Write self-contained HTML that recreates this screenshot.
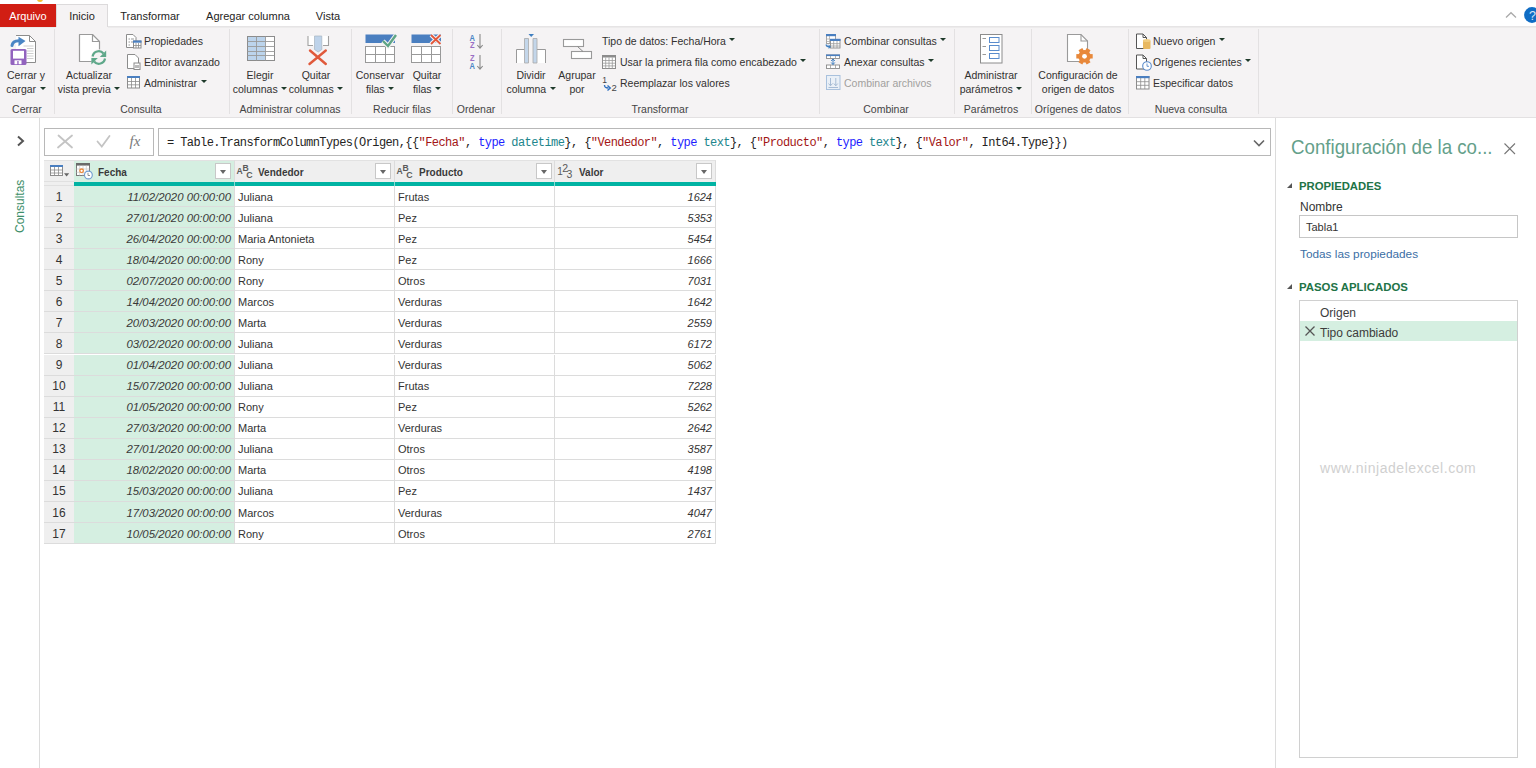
<!DOCTYPE html>
<html><head><meta charset="utf-8">
<style>
*{box-sizing:border-box;margin:0;padding:0}
html,body{width:1536px;height:768px;overflow:hidden;background:#fff;font-family:"Liberation Sans",sans-serif;color:#252423}
.a{position:absolute;white-space:nowrap}
.tab{position:absolute;top:4px;height:23px;font-size:11px;line-height:24px;text-align:center;color:#252423}
#ribbon{position:absolute;left:0;top:27px;width:1536px;height:91px;background:#f5f3f4;border-bottom:1px solid #e3e1e2}
.sep{position:absolute;top:29px;width:1px;height:85px;background:#e3e1e2}
.rt{position:absolute;top:69.3px;font-size:10.5px;line-height:13.5px;text-align:center;white-space:nowrap;color:#323130}
.gl{position:absolute;top:102.5px;font-size:10.5px;line-height:13px;text-align:center;white-space:nowrap;color:#444}
.st{position:absolute;font-size:10.5px;line-height:13px;white-space:nowrap;color:#323130}
.dd{display:inline-block;width:0;height:0;border-left:3px solid transparent;border-right:3px solid transparent;border-top:3px solid #1e3a2a;vertical-align:middle;margin-left:3.5px;position:relative;top:-2px}
#ov{position:absolute;left:0;top:0;width:1536px;height:768px;overflow:visible}
/* table */
.th{position:absolute;top:160px;height:22px;background:#efefef;border-right:1px solid #dcdcdc}
.thn{position:absolute;top:165.5px;font-size:10px;font-weight:bold;line-height:13px;color:#3a3a3a}
.ddb{position:absolute;top:163px;width:16px;height:16px;background:#fff;border:1px solid #c8c8c8}
.ddb:after{content:"";position:absolute;left:4px;top:6px;border-left:3.5px solid transparent;border-right:3.5px solid transparent;border-top:4px solid #666}
.tr{position:absolute;left:44px;width:672px;height:21px;font-size:11px;line-height:20px}
.tr div{position:absolute;top:0;height:21px;border-bottom:1px solid #dcdcdc;padding-top:0.5px;white-space:nowrap}
.c0{left:0;width:30px;background:#efefef;text-align:center;color:#333;font-size:12px}
.c1{left:30px;width:161px;background:#d5efe1;text-align:right;padding-right:3px;font-style:italic;color:#3b3a39;font-size:11.4px;border-right:1px solid #dcdcdc}
.c2{left:191px;width:160px;padding-left:3px;border-right:1px solid #dcdcdc;color:#333}
.c3{left:351px;width:160px;padding-left:3px;border-right:1px solid #dcdcdc;color:#333}
.c4{left:511px;width:161px;text-align:right;padding-right:3px;font-style:italic;border-right:1px solid #dcdcdc;color:#333}
.fm{position:absolute;left:167px;top:135.5px;font-family:"Liberation Mono",monospace;font-size:12px;letter-spacing:-0.58px;line-height:14px;color:#252423;white-space:pre}
.kw{color:#1c1cff}.ty{color:#21858c}.str{color:#a31515}
</style></head><body>
<div class="a" style="left:0;top:0;width:1536px;height:27px;background:#fff"></div>
<div class="a" style="left:0;top:26px;width:1536px;height:1px;background:#e6e4e5"></div>
<div class="a" style="left:36.5px;top:-4px;width:6px;height:5.5px;border-radius:50%;background:#f2c230"></div>
<div class="tab" style="left:0;width:56px;background:#d11e14;color:#fff">Arquivo</div>
<div class="tab" style="left:56px;width:52px;background:#f5f3f4;border:1px solid #dcdadb;border-bottom:none;height:24px;line-height:22.5px">Inicio</div>
<div class="tab" style="left:108px;width:84px">Transformar</div>
<div class="tab" style="left:196px;width:104px">Agregar columna</div>
<div class="tab" style="left:306px;width:44px">Vista</div>
<div id="ribbon">
</div>
<div class="a" style="left:108px;top:27px;width:1428px;height:1px;background:#ecebeb"></div>
<div class="a" style="left:0;top:27px;width:56px;height:1px;background:#ecebeb"></div>
<!-- separators -->
<div class="sep" style="left:54px"></div>
<div class="sep" style="left:229px"></div>
<div class="sep" style="left:351px"></div>
<div class="sep" style="left:452px"></div>
<div class="sep" style="left:501px"></div>
<div class="sep" style="left:819px"></div>
<div class="sep" style="left:954px"></div>
<div class="sep" style="left:1031px"></div>
<div class="sep" style="left:1128px"></div>
<div class="sep" style="left:1258px"></div>

<!-- group labels -->
<div class="gl" style="left:-3px;width:60px">Cerrar</div>
<div class="gl" style="left:100px;width:82px">Consulta</div>
<div class="gl" style="left:230px;width:120px">Administrar columnas</div>
<div class="gl" style="left:352px;width:100px">Reducir filas</div>
<div class="gl" style="left:446px;width:60px">Ordenar</div>
<div class="gl" style="left:600px;width:120px">Transformar</div>
<div class="gl" style="left:836px;width:100px">Combinar</div>
<div class="gl" style="left:951px;width:80px">Parámetros</div>
<div class="gl" style="left:1028px;width:100px">Orígenes de datos</div>
<div class="gl" style="left:1141px;width:100px">Nueva consulta</div>

<!-- big button texts -->
<div class="rt" style="left:-4px;width:60px">Cerrar y<br>cargar<span class="dd"></span></div>
<div class="rt" style="left:49px;width:80px">Actualizar<br>vista previa<span class="dd"></span></div>
<div class="rt" style="left:225px;width:70px">Elegir<br>columnas<span class="dd"></span></div>
<div class="rt" style="left:281px;width:70px">Quitar<br>columnas<span class="dd"></span></div>
<div class="rt" style="left:350px;width:60px">Conservar<br>filas<span class="dd"></span></div>
<div class="rt" style="left:402px;width:50px">Quitar<br>filas<span class="dd"></span></div>
<div class="rt" style="left:500px;width:62px">Dividir<br>columna<span class="dd"></span></div>
<div class="rt" style="left:550px;width:54px">Agrupar<br>por</div>
<div class="rt" style="left:951px;width:80px">Administrar<br>parámetros<span class="dd"></span></div>
<div class="rt" style="left:1033px;width:90px">Configuración de<br>origen de datos</div>

<!-- small button texts -->
<div class="st" style="left:144px;top:34.5px">Propiedades</div>
<div class="st" style="left:144px;top:55.5px">Editor avanzado</div>
<div class="st" style="left:144px;top:76.5px">Administrar<span class="dd"></span></div>
<div class="st" style="left:602px;top:34.5px">Tipo de datos: Fecha/Hora<span class="dd"></span></div>
<div class="st" style="left:620px;top:55.5px">Usar la primera fila como encabezado<span class="dd"></span></div>
<div class="st" style="left:620px;top:76.5px">Reemplazar los valores</div>
<div class="st" style="left:844px;top:34.5px">Combinar consultas<span class="dd"></span></div>
<div class="st" style="left:844px;top:55.5px">Anexar consultas<span class="dd"></span></div>
<div class="st" style="left:844px;top:76.5px;color:#a19f9d">Combinar archivos</div>
<div class="st" style="left:1153px;top:34.5px">Nuevo origen<span class="dd"></span></div>
<div class="st" style="left:1153px;top:55.5px">Orígenes recientes<span class="dd"></span></div>
<div class="st" style="left:1153px;top:76.5px">Especificar datos</div>
<!-- left panel -->
<div class="a" style="left:39px;top:118px;width:1px;height:650px;background:#dcdcdc"></div>
<div class="a" style="left:1275px;top:118px;width:1px;height:650px;background:#dcdcdc"></div>
<div class="a" style="left:2px;top:208px;width:36px;transform:rotate(-90deg);transform-origin:center;font-size:12px;color:#3d8f6a;text-align:center">Consultas</div>

<!-- formula bar -->
<div class="a" style="left:44px;top:128px;width:110px;height:28px;border:1px solid #b8b8b8;background:#fff"></div>
<div class="a" style="left:158px;top:128px;width:1113px;height:28px;border:1px solid #b8b8b8;background:#fff"></div>
<div class="fm">= Table.TransformColumnTypes(Origen,{{<span class="str">"Fecha"</span>, <span class="kw">type</span> <span class="ty">datetime</span>}, {<span class="str">"Vendedor"</span>, <span class="kw">type</span> <span class="ty">text</span>}, {<span class="str">"Producto"</span>, <span class="kw">type</span> <span class="ty">text</span>}, {<span class="str">"Valor"</span>, Int64.Type}})</div>

<!-- table header -->
<div class="th" style="left:44px;width:30px;border-right:none;border-top:1px solid #e2e2e2"></div>
<div class="th" style="left:74px;width:161px;background:#d5efe1;border-top:1px solid #e2e2e2"></div>
<div class="th" style="left:235px;width:160px;border-top:1px solid #e2e2e2"></div>
<div class="th" style="left:395px;width:160px;border-top:1px solid #e2e2e2"></div>
<div class="th" style="left:555px;width:161px;border-top:1px solid #e2e2e2"></div>
<div class="a" style="left:44px;top:181px;width:30px;height:5px;background:#efefef;border-top:1px solid #e0e0e0;border-bottom:1px solid #e0e0e0"></div>
<div class="a" style="left:74px;top:182px;width:642px;height:4px;background:#01b3a3"></div>
<div class="a" style="left:234px;top:182px;width:1px;height:4px;background:#8ad8d0"></div>
<div class="a" style="left:394px;top:182px;width:1px;height:4px;background:#8ad8d0"></div>
<div class="a" style="left:554px;top:182px;width:1px;height:4px;background:#8ad8d0"></div>
<div class="thn" style="left:98px">Fecha</div>
<div class="thn" style="left:258px">Vendedor</div>
<div class="thn" style="left:419px">Producto</div>
<div class="thn" style="left:579px">Valor</div>
<div class="ddb" style="left:215px"></div>
<div class="ddb" style="left:375px"></div>
<div class="ddb" style="left:536px"></div>
<div class="ddb" style="left:696px"></div>
<div class="tr" style="top:186.00px"><div class="c0">1</div><div class="c1">11/02/2020 00:00:00</div><div class="c2">Juliana</div><div class="c3">Frutas</div><div class="c4">1624</div></div>
<div class="tr" style="top:207.07px"><div class="c0">2</div><div class="c1">27/01/2020 00:00:00</div><div class="c2">Juliana</div><div class="c3">Pez</div><div class="c4">5353</div></div>
<div class="tr" style="top:228.14px"><div class="c0">3</div><div class="c1">26/04/2020 00:00:00</div><div class="c2">Maria Antonieta</div><div class="c3">Pez</div><div class="c4">5454</div></div>
<div class="tr" style="top:249.21px"><div class="c0">4</div><div class="c1">18/04/2020 00:00:00</div><div class="c2">Rony</div><div class="c3">Pez</div><div class="c4">1666</div></div>
<div class="tr" style="top:270.28px"><div class="c0">5</div><div class="c1">02/07/2020 00:00:00</div><div class="c2">Rony</div><div class="c3">Otros</div><div class="c4">7031</div></div>
<div class="tr" style="top:291.35px"><div class="c0">6</div><div class="c1">14/04/2020 00:00:00</div><div class="c2">Marcos</div><div class="c3">Verduras</div><div class="c4">1642</div></div>
<div class="tr" style="top:312.42px"><div class="c0">7</div><div class="c1">20/03/2020 00:00:00</div><div class="c2">Marta</div><div class="c3">Verduras</div><div class="c4">2559</div></div>
<div class="tr" style="top:333.49px"><div class="c0">8</div><div class="c1">03/02/2020 00:00:00</div><div class="c2">Juliana</div><div class="c3">Verduras</div><div class="c4">6172</div></div>
<div class="tr" style="top:354.56px"><div class="c0">9</div><div class="c1">01/04/2020 00:00:00</div><div class="c2">Juliana</div><div class="c3">Verduras</div><div class="c4">5062</div></div>
<div class="tr" style="top:375.63px"><div class="c0">10</div><div class="c1">15/07/2020 00:00:00</div><div class="c2">Juliana</div><div class="c3">Frutas</div><div class="c4">7228</div></div>
<div class="tr" style="top:396.70px"><div class="c0">11</div><div class="c1">01/05/2020 00:00:00</div><div class="c2">Rony</div><div class="c3">Pez</div><div class="c4">5262</div></div>
<div class="tr" style="top:417.77px"><div class="c0">12</div><div class="c1">27/03/2020 00:00:00</div><div class="c2">Marta</div><div class="c3">Verduras</div><div class="c4">2642</div></div>
<div class="tr" style="top:438.84px"><div class="c0">13</div><div class="c1">27/01/2020 00:00:00</div><div class="c2">Juliana</div><div class="c3">Otros</div><div class="c4">3587</div></div>
<div class="tr" style="top:459.91px"><div class="c0">14</div><div class="c1">18/02/2020 00:00:00</div><div class="c2">Marta</div><div class="c3">Otros</div><div class="c4">4198</div></div>
<div class="tr" style="top:480.98px"><div class="c0">15</div><div class="c1">15/03/2020 00:00:00</div><div class="c2">Juliana</div><div class="c3">Pez</div><div class="c4">1437</div></div>
<div class="tr" style="top:502.05px"><div class="c0">16</div><div class="c1">17/03/2020 00:00:00</div><div class="c2">Marcos</div><div class="c3">Verduras</div><div class="c4">4047</div></div>
<div class="tr" style="top:523.12px"><div class="c0">17</div><div class="c1">10/05/2020 00:00:00</div><div class="c2">Rony</div><div class="c3">Otros</div><div class="c4">2761</div></div><!-- settings panel -->
<div class="a" style="left:1291px;top:134px;font-size:18.7px;line-height:24px;color:#64a08a;transform:scaleY(1.1);transform-origin:0 0">Configuración de la co...</div>
<div class="a" style="left:1299px;top:179.8px;font-size:11.3px;font-weight:bold;line-height:13px;color:#217346">PROPIEDADES</div>
<div class="a" style="left:1300px;top:200px;font-size:12px;line-height:14px;color:#333">Nombre</div>
<div class="a" style="left:1299px;top:215px;width:219px;height:23px;border:1px solid #c6c6c6;background:#fff"></div>
<div class="a" style="left:1306px;top:220px;font-size:11px;line-height:14px;color:#333">Tabla1</div>
<div class="a" style="left:1300px;top:247px;font-size:11.8px;line-height:14px;color:#3b6ea5">Todas las propiedades</div>
<div class="a" style="left:1299px;top:280.8px;font-size:11.4px;font-weight:bold;line-height:13px;color:#217346">PASOS APLICADOS</div>
<div class="a" style="left:1299px;top:300px;width:219px;height:458px;border:1px solid #d0d0d0;background:#fff"></div>
<div class="a" style="left:1320px;top:306px;font-size:12px;line-height:14px;color:#3c3c3c">Origen</div>
<div class="a" style="left:1300px;top:321px;width:217px;height:20px;background:#d5efe1"></div>
<div class="a" style="left:1320px;top:326px;font-size:12px;line-height:14px;color:#3c3c3c">Tipo cambiado</div>
<div class="a" style="left:1320px;top:460px;font-size:14px;line-height:16px;color:#d0d0d0;letter-spacing:0.55px">www.ninjadelexcel.com</div>
<svg id="ov" viewBox="0 0 1536 768">
<!-- top right -->
<path d="M1506 17.5 L1511 12.7 L1516 17.5" fill="none" stroke="#aaa" stroke-width="1.3"/>
<circle cx="1532" cy="15" r="7.9" fill="#0f6cc4"/>
<text x="1529" y="19.8" font-family="Liberation Sans" font-size="12.5" fill="#d6e6f7">?</text>

<!-- Cerrar y cargar -->
<path d="M16 35.5 H29.5 L35.5 41.5 V62.5 H26" fill="#fff" stroke="#8c8c8c"/>
<path d="M16 35.5 V49 H26 V62.5" fill="#fff" stroke="none"/>
<path d="M29.5 35.5 V41.5 H35.5" fill="none" stroke="#8c8c8c"/>
<path d="M23.5 46 H33.5 M27 48.5 H33.5 M27 51 H33.5 M27 53.5 H33.5 M27 56 H33.5 M27 58.5 H33.5" stroke="#c8c8c8" stroke-width="0.9"/>
<path d="M12 45.5 C12.5 42 15 40.5 20 40.8" fill="none" stroke="#4a86c5" stroke-width="3" stroke-linecap="round"/>
<path d="M18.5 36.8 L25.5 41 L18.5 46.3 Z" fill="#4a86c5"/>
<rect x="10.5" y="49" width="16" height="16" rx="1.6" fill="#9263be"/>
<rect x="13" y="50.8" width="11" height="7.8" fill="#fff"/>
<rect x="14.5" y="60.3" width="7" height="3.9" fill="#fff"/>
<rect x="17.3" y="61" width="1.3" height="4" fill="#9263be"/>
<!-- Actualizar -->
<path d="M79.5 34.5 H92.5 L99.5 41.5 V61.5 H79.5 Z" fill="#fff" stroke="#9a9a9a" stroke-width="1.2" stroke-linejoin="round"/>
<path d="M92.5 34.5 V41.5 H99.5" fill="none" stroke="#9a9a9a" stroke-width="1.2"/>
<circle cx="98.8" cy="57.5" r="8.2" fill="#f5f3f4"/>
<path d="M92.6 56.5 A6.2 6.2 0 0 1 103.5 53.5" fill="none" stroke="#5fa88a" stroke-width="2.2"/>
<path d="M106.2 50.5 V57 H99.8 Z" fill="#5fa88a"/>
<path d="M105 58.5 A6.2 6.2 0 0 1 94.1 61.5" fill="none" stroke="#5fa88a" stroke-width="2.2"/>
<path d="M91.4 64.5 V58 H97.8 Z" fill="#5fa88a"/>
<!-- Propiedades -->
<path d="M126.5 34.5 H133 L136 37.5 V47.5 H126.5 Z" fill="#fff" stroke="#8c8c8c"/>
<path d="M128.5 39 h1.5 M131 39 h3 M128.5 42 h1.5 M131 42 h2 M128.5 45 h1.5" stroke="#999"/>
<rect x="133.5" y="41" width="7.5" height="7" fill="#fff" stroke="#8c8c8c"/>
<rect x="133" y="40.5" width="8.5" height="2.2" fill="#4a7fc0"/>
<path d="M136 43 V48 M138.5 43 V48 M133.5 45.5 H141" stroke="#8c8c8c" stroke-width="0.8"/>
<!-- Editor avanzado -->
<path d="M127.5 54.5 H135 L138.5 58 V68.5 H127.5 Z" fill="#fff" stroke="#8c8c8c"/>
<rect x="134" y="63" width="6" height="6.5" fill="#fff" stroke="#8c8c8c"/>
<path d="M136 65 V68 M138 65 V68" stroke="#555" stroke-width="0.8"/>
<!-- Administrar -->
<rect x="127.5" y="76.5" width="12" height="11.5" fill="#fff" stroke="#8c8c8c"/>
<rect x="127" y="76" width="13" height="2" fill="#4a7fc0"/>
<path d="M131.5 78 V88 M135.5 78 V88 M127.5 81.5 H139.5 M127.5 84.8 H139.5" stroke="#8c8c8c" stroke-width="0.8"/>

<!-- Elegir columnas -->
<rect x="247.5" y="36.5" width="27" height="24" fill="#fff" stroke="#8c8c8c"/>
<rect x="248" y="37" width="17.5" height="23" fill="#bcd4ec"/>
<path d="M256.5 36.5 V60.5 M265.5 36.5 V60.5 M247.5 41.5 H274.5 M247.5 46.5 H274.5 M247.5 51.5 H274.5 M247.5 55.5 H274.5" stroke="#9a9a9a" stroke-width="0.9"/>
<!-- Quitar columnas -->
<rect x="308" y="36" width="20.5" height="9.5" fill="#fff"/>
<path d="M308 36 V45.5 H313 M328.5 36 V45.5 H323" fill="none" stroke="#a0a0a0" stroke-width="1.1"/>
<path d="M314.5 36 H321.8 V49.5 L318.2 52 L314.5 49.5 Z" fill="#bed3ea" stroke="#a8b4c0" stroke-width="0.7"/>
<path d="M310 50.5 L325.8 64 M325.8 50.5 L309.5 64" stroke="#e0593b" stroke-width="2.4" stroke-linecap="round"/>

<!-- Conservar filas -->
<rect x="365.5" y="34.5" width="29.5" height="8.5" fill="#4a7fc0"/>
<rect x="365.5" y="46.5" width="29" height="16" fill="#fff" stroke="#999"/>
<path d="M375.5 46.5 V62.5 M385.5 46.5 V62.5 M365.5 54.5 H394.5" stroke="#999"/>
<path d="M383 41 L388 46 L396 35" fill="none" stroke="#f5f3f4" stroke-width="4.5"/>
<path d="M383 41 L388 46 L396 35" fill="none" stroke="#5ea585" stroke-width="2.4"/>
<!-- Quitar filas -->
<rect x="411.5" y="34.5" width="29.5" height="8.5" fill="#4a7fc0"/>
<rect x="411.5" y="46.5" width="29" height="16" fill="#fff" stroke="#999"/>
<path d="M421.5 46.5 V62.5 M431.5 46.5 V62.5 M411.5 54.5 H440.5" stroke="#999"/>
<path d="M431 35 L440.5 44 M440.5 35 L431 44" stroke="#f5f3f4" stroke-width="4"/>
<path d="M431 35 L440.5 44 M440.5 35 L431 44" stroke="#e1573a" stroke-width="1.8"/>

<!-- Sort -->
<g font-family="Liberation Sans" font-size="9.6" font-weight="bold" transform="translate(469.6 0) scale(0.78 1)">
<text x="0" y="40.8" fill="#4a86c5">A</text>
<text x="0.6" y="48.3" fill="#9b6fc4">Z</text>
<text x="0.6" y="61.3" fill="#9b6fc4">Z</text>
<text x="0" y="68.9" fill="#4a86c5">A</text>
</g>
<path d="M480 34 V48 M477.3 45 L480 48.2 L482.7 45" fill="none" stroke="#8a8a8a" stroke-width="1.1"/>
<path d="M480 55 V69 M477.3 66 L480 69.2 L482.7 66" fill="none" stroke="#8a8a8a" stroke-width="1.1"/>

<!-- Dividir columna -->
<path d="M516.5 63 V49.5 H524.5 V63 Z M536.5 49.5 H545.5 V63 H536.5 Z" fill="#fff" stroke="none"/>
<path d="M516.5 63 V49.5 H524.5 M536.5 49.5 H545.5 V63" fill="none" stroke="#999"/>
<path d="M524.5 38.5 H528.5 V63 H524.5 Z M533 38.5 H537 V63 H533 Z" fill="#c3d6ea" stroke="#a8a8a8" stroke-width="0.8"/>
<path d="M528.5 34 H534 L531.2 37 Z" fill="#3f7fc0"/>
<!-- Agrupar por -->
<rect x="563.5" y="39.5" width="20" height="7" fill="#fff" stroke="#999" stroke-width="1.1"/>
<rect x="571.5" y="51.5" width="20" height="7" fill="#fff" stroke="#999" stroke-width="1.1"/>
<path d="M577.5 46.5 L583 51.5" stroke="#888"/>
<!-- Usar primera fila -->
<rect x="602.5" y="55.5" width="13" height="13" fill="#fff" stroke="#8c8c8c"/>
<rect x="602.5" y="55.5" width="13" height="2" fill="#8c8c8c"/>
<path d="M605.7 57.5 V68.5 M609 57.5 V68.5 M612.3 57.5 V68.5 M602.5 60.5 H615.5 M602.5 63.2 H615.5 M602.5 65.9 H615.5" stroke="#9a9a9a" stroke-width="0.8"/>
<!-- Reemplazar -->
<text x="602.3" y="83" font-family="Liberation Sans" font-size="8.5" fill="#444">1</text>
<text x="611.5" y="90.5" font-family="Liberation Sans" font-size="9.5" fill="#444">2</text>
<path d="M604.5 85 C604.5 87.5 605.5 88 608.5 88" fill="none" stroke="#2f70c0" stroke-width="1.4"/>
<path d="M607.5 85.5 L610.3 88 L607.5 90.5" fill="none" stroke="#2f70c0" stroke-width="1.4"/>
<!-- Combinar consultas -->
<rect x="826.5" y="34.5" width="9" height="9" fill="#fff" stroke="#9a9a9a" stroke-width="0.9"/>
<rect x="826" y="34" width="10" height="2.2" fill="#4a7fc0"/>
<path d="M826.5 39 H830 M826.5 41.5 H830 M829.5 36 V43" stroke="#b0b0b0" stroke-width="0.8"/>
<rect x="830.5" y="39.5" width="9.5" height="8.5" fill="#fff" stroke="#8a8a8a" stroke-width="0.9"/>
<rect x="830" y="38.8" width="10.5" height="2.2" fill="#4a7fc0"/>
<path d="M833.7 41 V48 M837 41 V48 M830.5 43.7 H840 M830.5 46 H840" stroke="#9a9a9a" stroke-width="0.8"/>
<path d="M826.3 44.5 C826.3 46.5 827.5 46.8 829.5 46.8" fill="none" stroke="#3f7fc0" stroke-width="1.5"/>
<path d="M828.6 44.6 L831 46.8 L828.6 49 Z" fill="#3f7fc0"/>
<!-- Anexar -->
<rect x="826.5" y="55" width="13" height="3.5" fill="#fff" stroke="#8a8a8a" stroke-width="0.9"/>
<rect x="826" y="54.5" width="14" height="1.6" fill="#4a7fc0"/>
<rect x="826.5" y="65" width="13" height="3.5" fill="#fff" stroke="#8a8a8a" stroke-width="0.9"/>
<path d="M830.5 56 V58.5 M835.5 56 V58.5 M830.5 65 V68.5 M835.5 65 V68.5" stroke="#9a9a9a" stroke-width="0.8"/>
<path d="M833 59 V64.5 M831.2 61 L833 59 L834.8 61 M831.2 62.5 L833 64.5 L834.8 62.5" fill="none" stroke="#3f7fc0" stroke-width="1"/>
<!-- Combinar archivos -->
<rect x="826.5" y="75.5" width="13.5" height="14" fill="#eaf0f7" stroke="#a9c1dd"/>
<path d="M830.5 78 V85.5 M828.5 83.5 L830.5 85.8 L832.5 83.5 M835.8 78 V85.5 M833.8 83.5 L835.8 85.8 L837.8 83.5 M828.5 87.5 H838" fill="none" stroke="#9fb6d0" stroke-width="0.9"/>

<!-- Administrar parametros -->
<rect x="980.5" y="34.5" width="21.5" height="28.5" fill="#fff" stroke="#8c8c8c"/>
<path d="M982.5 38.5 H986 M982.5 46.5 H986 M982.5 54.5 H986" stroke="#999"/>
<rect x="989.5" y="37.5" width="9.5" height="5" fill="#fff" stroke="#5a8ccc"/>
<rect x="989.5" y="45.5" width="9.5" height="5" fill="#fff" stroke="#5a8ccc"/>
<rect x="989.5" y="53.5" width="9.5" height="5" fill="#fff" stroke="#5a8ccc"/>

<!-- Configuracion origen -->
<path d="M1067.5 34.5 H1081 L1087.5 41 V61.5 H1067.5 Z" fill="#fff" stroke="#9a9a9a" stroke-width="1.1"/>
<path d="M1081 34.5 V41 H1087.5" fill="none" stroke="#9a9a9a" stroke-width="1.1"/>
<g transform="translate(1084.5 56.3)">
<circle r="6.2" fill="#e8883a"/>
<rect x="-2.2" y="-8.2" width="4.4" height="16.4" fill="#e8883a" transform="rotate(30)"/>
<rect x="-2.2" y="-8.2" width="4.4" height="16.4" fill="#e8883a" transform="rotate(90)"/>
<rect x="-2.2" y="-8.2" width="4.4" height="16.4" fill="#e8883a" transform="rotate(150)"/>
<circle r="2.4" fill="#fff"/>
</g>
<!-- Nuevo origen -->
<path d="M1136.5 34 H1143 L1146.5 37.5 V48.5 H1136.5 Z" fill="#fff" stroke="#555"/>
<path d="M1143 34 V37.5 H1146.5" fill="none" stroke="#555"/>
<rect x="1143" y="40.5" width="7.5" height="8.5" rx="1" fill="#e8b860"/>
<ellipse cx="1146.7" cy="40.5" rx="3.8" ry="1.5" fill="#f0cc80"/>
<!-- Origenes recientes -->
<path d="M1136.5 55 H1143 L1146.5 58.5 V69 H1136.5 Z" fill="#fff" stroke="#555"/>
<path d="M1143 55 V58.5 H1146.5" fill="none" stroke="#555"/>
<circle cx="1147" cy="66" r="4.3" fill="#fff" stroke="#5a8ccc" stroke-width="1.1"/>
<path d="M1147 63.5 V66.3 H1149" fill="none" stroke="#5a8ccc" stroke-width="0.9"/>
<!-- Especificar datos -->
<rect x="1136.5" y="76.5" width="12.5" height="12.5" fill="#fff" stroke="#8c8c8c"/>
<rect x="1136" y="76" width="13.5" height="2.2" fill="#4a7fc0"/>
<path d="M1140.7 78 V89 M1144.8 78 V89 M1136.5 81.7 H1149 M1136.5 85.3 H1149" stroke="#8c8c8c" stroke-width="0.8"/>

<!-- left panel chevron -->
<path d="M18 136.5 L23 141 L18 145.5" fill="none" stroke="#555" stroke-width="2"/>
<!-- formula bar icons -->
<path d="M58.5 135.5 L72 147.5 M72 135.5 L58 147.5" stroke="#c4c4c4" stroke-width="1.8" stroke-linecap="round"/>
<path d="M97.5 141.5 L101.8 146.5 L109.5 136" fill="none" stroke="#c4c4c4" stroke-width="1.8" stroke-linecap="round"/>
<text x="129.5" y="146" font-family="Liberation Serif" font-style="italic" font-size="15" fill="#7a7a7a">fx</text>
<path d="M1254 140.5 L1259 145.5 L1264 140.5" fill="none" stroke="#666" stroke-width="1.6"/>

<!-- table header icons -->
<rect x="50.5" y="165.5" width="12" height="10" fill="#fff" stroke="#8c8c8c"/>
<rect x="50" y="165" width="13" height="2" fill="#4a7fc0"/>
<path d="M54.5 167 V175.5 M58.5 167 V175.5 M50.5 170 H62.5 M50.5 173 H62.5" stroke="#8c8c8c" stroke-width="0.8"/>
<path d="M64 173.3 H69.2 L66.6 176.5 Z" fill="#666"/>
<!-- fecha icon -->
<rect x="76.5" y="163.5" width="13" height="12" fill="#fff" stroke="#777"/>
<rect x="76" y="163" width="14" height="2.6" fill="#6a6a6a"/>
<path d="M79.7 165.6 V175.5 M83 165.6 V175.5 M86.3 165.6 V175.5 M76.5 169 H89.5 M76.5 172.3 H89.5" stroke="#c8c8c8" stroke-width="0.7"/>
<circle cx="81.6" cy="170.8" r="1.8" fill="#fff" stroke="#eb8a3c" stroke-width="1.3"/>
<circle cx="88.4" cy="175" r="3.9" fill="#fff" stroke="#6f9bcf" stroke-width="1.1"/>
<path d="M88 172.8 V175.5 H90" fill="none" stroke="#777" stroke-width="0.8"/>
<!-- ABC icons -->
<g font-family="Liberation Sans" fill="#5a5a5a" font-weight="bold">
<text x="236.6" y="174.4" font-size="8.6">A</text><text x="242.6" y="170.7" font-size="8.6">B</text><text x="246.2" y="177.9" font-size="8.8">C</text>
<text x="396.6" y="174.4" font-size="8.6">A</text><text x="402.6" y="170.7" font-size="8.6">B</text><text x="406.2" y="177.9" font-size="8.8">C</text>
</g>
<g font-family="Liberation Sans" fill="#5a5a5a">
<text x="557.3" y="175.2" font-size="10">1</text><text x="562.3" y="172" font-size="10.5">2</text><text x="566.6" y="178" font-size="10.5">3</text>
</g>

<!-- settings panel -->
<path d="M1504.5 143.5 L1515 154 M1515 143.5 L1504.5 154" stroke="#777" stroke-width="1.1"/>
<path d="M1287 188 L1292 188 L1292 183 Z" fill="#555"/>
<path d="M1287 289 L1292 289 L1292 284 Z" fill="#555"/>
<path d="M1305.5 326.5 L1314.5 335.5 M1314.5 326.5 L1305.5 335.5" stroke="#555" stroke-width="1.3"/>
</svg>
</body></html>
